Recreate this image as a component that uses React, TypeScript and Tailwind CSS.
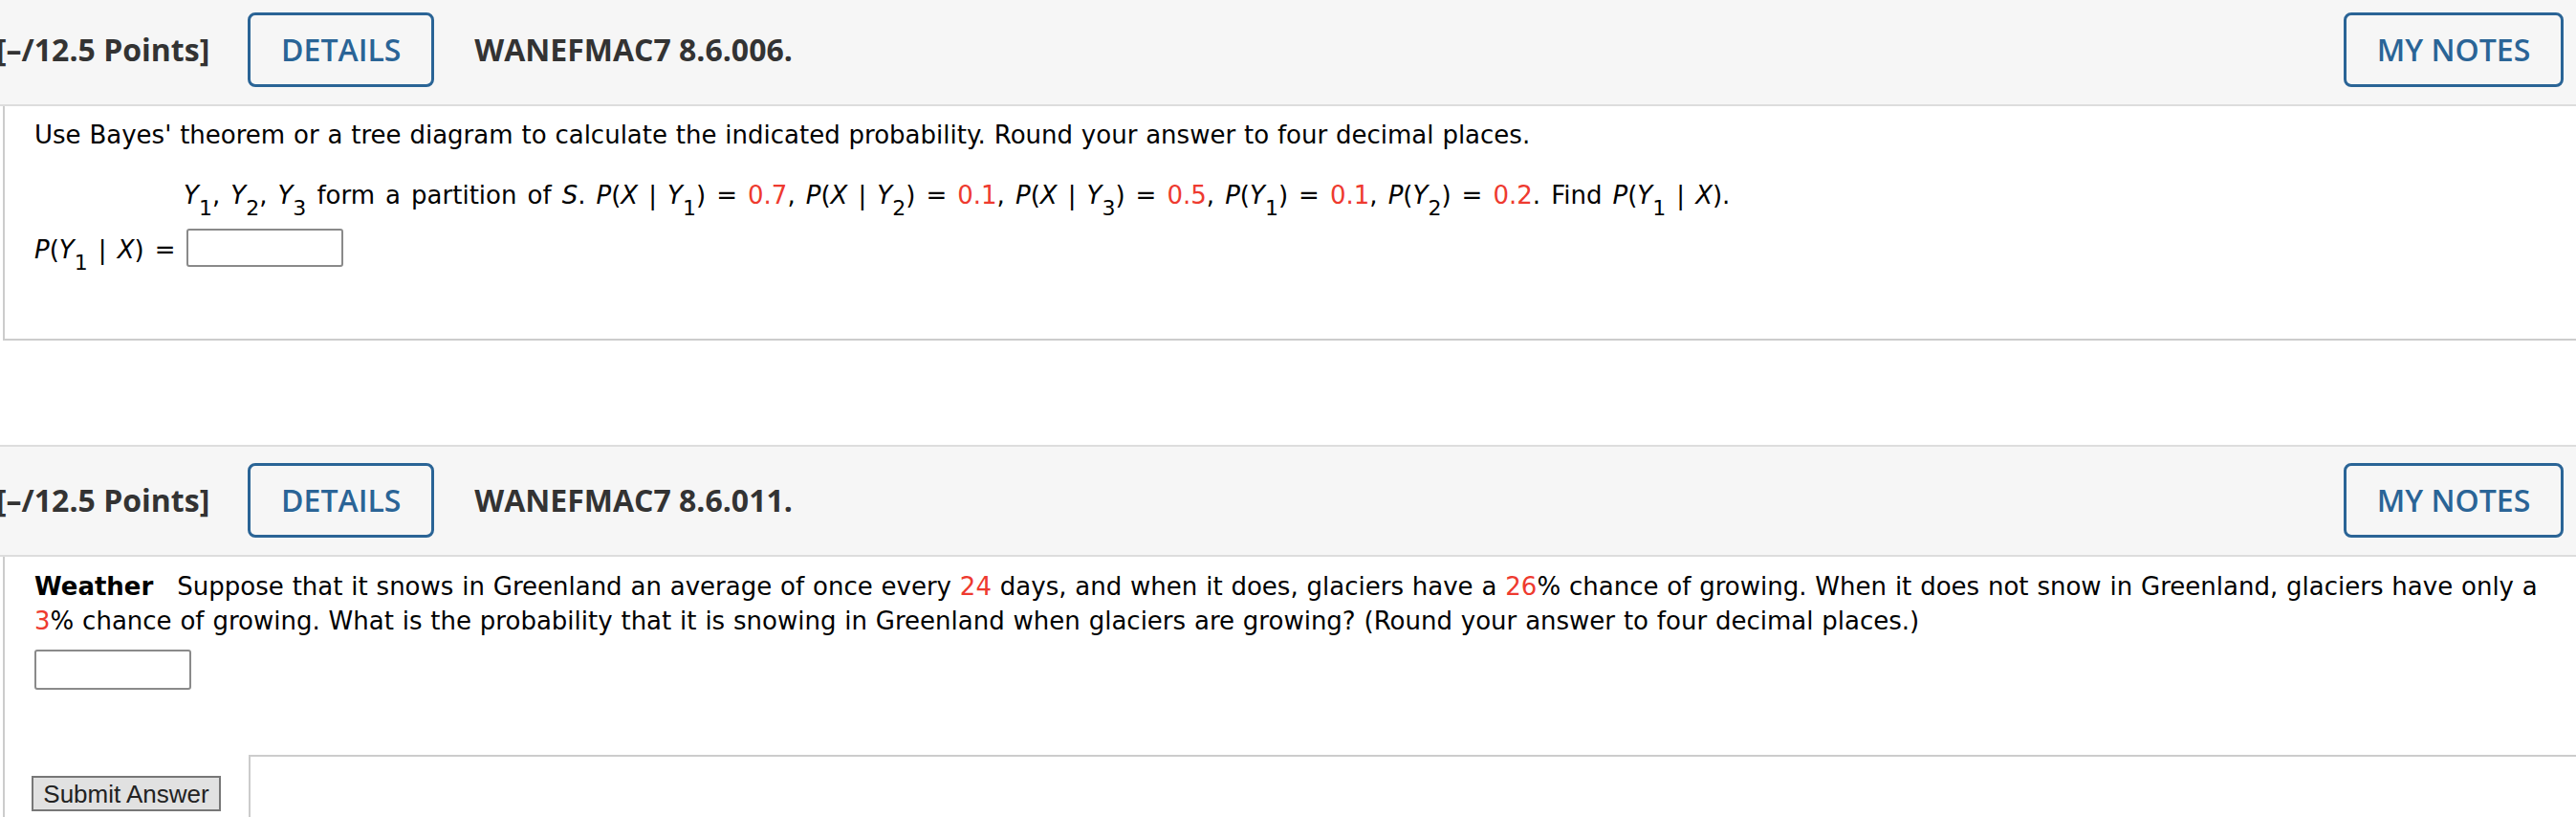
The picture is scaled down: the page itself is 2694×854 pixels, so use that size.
import React from 'react';

const red = 'text-[#ee3a2f]';

function Header({ code, first }: { code: string; first?: boolean }) {
  return (
    <div
      className={`flex items-center bg-[#f6f6f6] border-b-2 border-[#dddddd] pb-[18px] pr-[13px] font-['Open_Sans',sans-serif] text-[#333333] ${
        first ? 'pt-[13px]' : 'mt-[109px] border-t-2 pt-[17px]'
      }`}
    >
      <span className="-ml-[4px] text-[32px] font-bold whitespace-nowrap">[–/12.5 Points]</span>
      <div className="ml-[40px] flex h-[78px] w-[195px] items-center justify-center rounded-[8px] border-[3px] border-[#2a6496] text-[32px] font-semibold text-[#2a6496]">
        DETAILS
      </div>
      <span className="ml-[42px] text-[32px] font-bold whitespace-nowrap">{code}</span>
      <div className="ml-auto flex h-[78px] w-[230px] items-center justify-center rounded-[8px] border-[3px] border-[#2a6496] text-[32px] font-semibold text-[#2a6496]">
        MY NOTES
      </div>
    </div>
  );
}

// italic variable with subscript
function V({ n, s }: { n: string; s?: string }) {
  return (
    <>
      <i>{n}</i>
      {s && <sub className="relative bottom-[-12px] text-[22px] leading-none">{s}</sub>}
    </>
  );
}

function Num({ v }: { v: string }) {
  return <span className={red}>{v}</span>;
}

export default function App() {
  return (
    <div className="h-[854px] w-[2694px] overflow-hidden bg-white font-['DejaVu_Sans',Verdana,sans-serif] text-black">
      <Header code="WANEFMAC7 8.6.006." first />
      <div className="ml-[3px] h-[245px] border-b-2 border-l-2 border-[#cccccc] pl-[31px] pt-[12px] text-[26px] leading-[36px] [word-spacing:0.6px]">
        <p>Use Bayes' theorem or a tree diagram to calculate the indicated probability. Round your answer to four decimal places.</p>
        <p className="mt-[27px] whitespace-nowrap pl-[156px] [word-spacing:2.8px]">
          <V n="Y" s="1" />, <V n="Y" s="2" />, <V n="Y" s="3" /> form a partition of <i>S</i>. <i>P</i>(<i>X</i> | <V n="Y" s="1" />) ={' '}
          <Num v="0.7" />, <i>P</i>(<i>X</i> | <V n="Y" s="2" />) = <Num v="0.1" />, <i>P</i>(<i>X</i> | <V n="Y" s="3" />) ={' '}
          <Num v="0.5" />, <i>P</i>(<V n="Y" s="1" />) = <Num v="0.1" />, <i>P</i>(<V n="Y" s="2" />) = <Num v="0.2" />. Find{' '}
          <i>P</i>(<V n="Y" s="1" /> | <i>X</i>).
        </p>
        <div className="mt-[17px] flex h-[40px] items-center">
          <span className="whitespace-nowrap pt-[4px] [word-spacing:2.8px]">
            <i>P</i>(<V n="Y" s="1" /> | <i>X</i>) =
          </span>
          <input className="ml-[12px] h-[40px] w-[164px] rounded-[3px] border-2 border-[#8a8a8a] bg-white" />
        </div>
      </div>

      <Header code="WANEFMAC7 8.6.011." />
      <div className="ml-[3px] h-[400px] border-l-2 border-[#cccccc] pl-[31px] pt-[13px] text-[26px] leading-[36px] [word-spacing:0.6px]">
        <p className="whitespace-nowrap">
          <b>Weather</b>
          <span className="ml-[25px]">
            Suppose that it snows in Greenland an average of once every <Num v="24" /> days, and when it does, glaciers have a{' '}
            <Num v="26" />% chance of growing. When it does not snow in Greenland, glaciers have only a
          </span>
          <br />
          <Num v="3" />% chance of growing. What is the probability that it is snowing in Greenland when glaciers are growing? (Round
          your answer to four decimal places.)
        </p>
        <input className="mt-[12px] block h-[42px] w-[164px] rounded-[3px] border-2 border-[#8a8a8a] bg-white" />
        <div className="mt-[68px] flex items-start">
          <button className="-ml-[3px] mt-[22px] h-[37px] w-[198px] border-2 border-[#777777] bg-[#e1e1e1] font-['Liberation_Sans',Arial,sans-serif] text-[26px] leading-none text-[#222222] [word-spacing:0px]">
            Submit Answer
          </button>
          <div className="ml-[29px] h-[120px] flex-1 border-2 border-r-0 border-[#cccccc]" />
        </div>
      </div>
    </div>
  );
}
